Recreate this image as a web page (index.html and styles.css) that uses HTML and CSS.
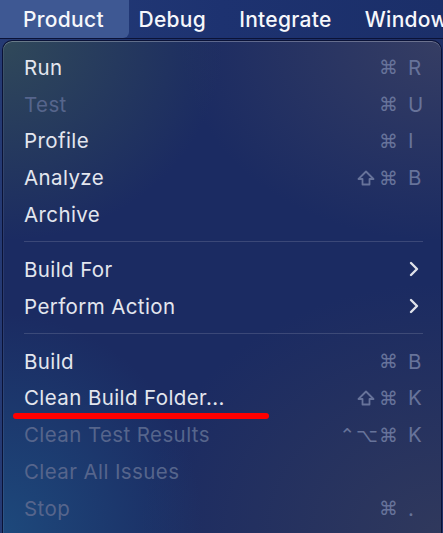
FILE: index.html
```html
<!DOCTYPE html>
<html>
<head>
<meta charset="utf-8">
<link rel="stylesheet" href="styles.css">
</head>
<body>
<div class="screen">
  <nav class="menubar">
    <div class="mb-item active">Product</div>
    <div class="mb-item">Debug</div>
    <div class="mb-item">Integrate</div>
    <div class="mb-item">Window</div>
  </nav>
  <div class="menu">
    <div class="row"><span class="label">Run</span><span class="sc"><span class="mods">⌘</span><span class="key">R</span></span></div>
    <div class="row dis"><span class="label">Test</span><span class="sc"><span class="mods">⌘</span><span class="key">U</span></span></div>
    <div class="row"><span class="label">Profile</span><span class="sc"><span class="mods">⌘</span><span class="key">I</span></span></div>
    <div class="row"><span class="label">Analyze</span><span class="sc"><svg class="shift" width="18" height="16" viewBox="0 0 18 16"><path d="M9 1.5 L16.5 9 H12.5 V14.5 H5.5 V9 H1.5 Z" fill="none" stroke="#67739a" stroke-width="1.8" stroke-linejoin="round"/></svg><span class="mods">⌘</span><span class="key">B</span></span></div>
    <div class="row"><span class="label">Archive</span></div>
    <div class="sep"></div>
    <div class="row"><span class="label">Build For</span><svg class="chev" width="10" height="16" viewBox="0 0 10 16"><polyline points="2,2 8,8 2,14" fill="none" stroke="#dfe2ea" stroke-width="2.4" stroke-linecap="round" stroke-linejoin="round"/></svg></div>
    <div class="row"><span class="label">Perform Action</span><svg class="chev" width="10" height="16" viewBox="0 0 10 16"><polyline points="2,2 8,8 2,14" fill="none" stroke="#dfe2ea" stroke-width="2.4" stroke-linecap="round" stroke-linejoin="round"/></svg></div>
    <div class="sep"></div>
    <div class="row"><span class="label">Build</span><span class="sc"><span class="mods">⌘</span><span class="key">B</span></span></div>
    <div class="row marked"><span class="label">Clean Build Folder...</span><span class="sc"><svg class="shift" width="18" height="16" viewBox="0 0 18 16"><path d="M9 1.5 L16.5 9 H12.5 V14.5 H5.5 V9 H1.5 Z" fill="none" stroke="#67739a" stroke-width="1.8" stroke-linejoin="round"/></svg><span class="mods">⌘</span><span class="key">K</span></span></div>
    <div class="row dis"><span class="label">Clean Test Results</span><span class="sc"><span class="mods">⌃⌥⌘</span><span class="key">K</span></span></div>
    <div class="row dis"><span class="label">Clear All Issues</span></div>
    <div class="row dis"><span class="label">Stop</span><span class="sc"><span class="mods">⌘</span><span class="key">.</span></span></div>
  </div>
</div>
</body>
</html>
```
FILE: styles.css
```css
html, body {
  margin: 0;
  padding: 0;
}
body {
  width: 443px;
  height: 533px;
  overflow: hidden;
  background: linear-gradient(90deg, #253a74 0%, #1c2f68 60%, #1f2f66 100%);
  font-family: Inter, "Liberation Sans", sans-serif;
}
.screen {
  display: flex;
  flex-direction: column;
  height: 533px;
}
.menubar {
  display: flex;
  height: 38px;
  align-items: stretch;
  background: linear-gradient(90deg, #243c78 0%, #1d3270 50%, #1b2f69 100%);
  color: #f6f7fb;
  font-size: 21px;
  font-weight: 500;
  border-bottom: 1px solid #0b1236;
  overflow: hidden;
}
.mb-item {
  display: flex;
  align-items: center;
  flex-shrink: 0;
  padding: 0 16.5px;
  letter-spacing: 0.3px;
}
.mb-item.active {
  padding-left: 23px;
  width: 129px;
  box-sizing: border-box;
  margin-right: -7px;
  background: #3e5893;
  border-radius: 0 0 6px 0;
}
.menu {
  margin: 1px 1px 0 2px;
  flex: 1;
  border-radius: 10px 10px 0 0;
  border: 1px solid #0a1236;
  border-bottom: none;
  box-shadow: inset 0 1px 0 rgba(255,255,255,0.28), inset 1px 0 0 rgba(255,255,255,0.08);
  background:
    radial-gradient(ellipse 220px 200px at 0% 0%, rgba(52,78,88,0.85), rgba(52,78,88,0) 100%),
    radial-gradient(ellipse 260px 200px at 100% 0%, rgba(60,66,100,0.8), rgba(60,66,100,0) 100%),
    radial-gradient(ellipse 200px 220px at 0% 100%, rgba(30,80,130,0.8), rgba(30,80,130,0) 100%),
    radial-gradient(ellipse 300px 250px at 100% 100%, rgba(50,58,92,0.9), rgba(50,58,92,0) 100%),
    #1b2b62;
  padding: 8px 18px 0 21px;
  box-sizing: border-box;
}
.row {
  height: 36.75px;
  display: flex;
  align-items: center;
  justify-content: space-between;
  color: #e3e6ee;
  font-size: 20.5px;
  letter-spacing: 0.4px;
}
.row.dis {
  color: #56658c;
}
.sc {
  display: flex;
  align-items: center;
  color: #67739a;
}
.shift {
  margin-right: 4px;
}
.mods {
  font-family: "DejaVu Sans", sans-serif;
  font-size: 19px;
  letter-spacing: 1px;
}
.key {
  width: 15px;
  margin-left: 9px;
  text-align: left;
  font-size: 20.5px;
  letter-spacing: 0;
}
.chev {
  margin-right: 4px;
}
.sep {
  height: 18.25px;
  display: flex;
  align-items: center;
}
.sep::before {
  content: "";
  flex: 1;
  height: 1px;
  background: rgba(255,255,255,0.14);
}
.marked {
  position: relative;
}
.marked::after {
  content: "";
  position: absolute;
  left: -11px;
  width: 256px;
  height: 6px;
  bottom: -3px;
  background: #ff0000;
  border-radius: 3px;
}
```
